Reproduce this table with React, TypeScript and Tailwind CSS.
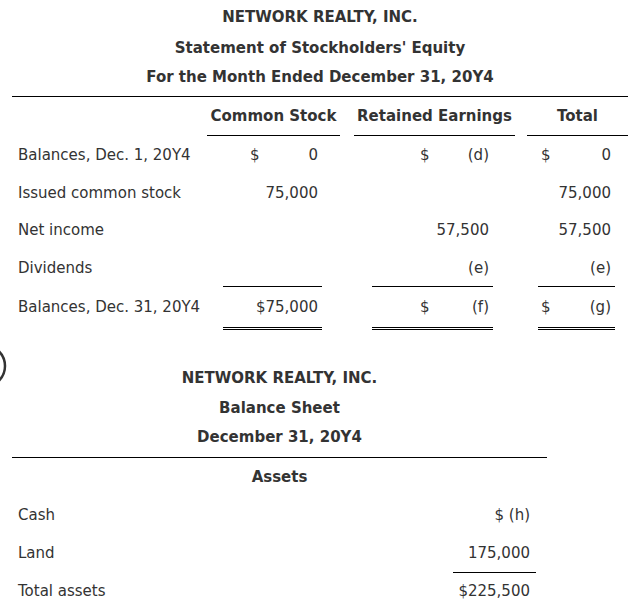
import React from "react";

const body = { fontFamily: '"DejaVu Sans", Verdana, sans-serif' };
const title = { fontFamily: '"DejaVu Sans", Tahoma, sans-serif' };

type Cell = { dollar?: boolean; value?: string };

const equityRows: { label: string; h: string; cells: Cell[] }[] = [
  {
    label: "Balances, Dec. 1, 20Y4",
    h: "h-[38px]",
    cells: [
      { dollar: true, value: "0" },
      { dollar: true, value: "(d)" },
      { dollar: true, value: "0" },
    ],
  },
  { label: "Issued common stock", h: "h-[37px]", cells: [{ value: "75,000" }, {}, { value: "75,000" }] },
  { label: "Net income", h: "h-[38px]", cells: [{}, { value: "57,500" }, { value: "57,500" }] },
  { label: "Dividends", h: "h-[37px]", cells: [{}, { value: "(e)" }, { value: "(e)" }] },
];

// column geometry
const cols = [
  { w: "w-[133px]", dollar: "left-[43px]", pr: "pr-[22px]", line: "ml-[16px] mr-[18px]" },
  { w: "w-[161px]", dollar: "left-[66px]", pr: "pr-[26px]", line: "ml-[18px] mr-[22px]" },
  { w: "w-[101px]", dollar: "left-[14px]", pr: "pr-[17px]", line: "ml-[11px] mr-[13px]" },
];
const gaps = ["", "ml-[14px]", "ml-[12px]"];

const ValueCell = ({ i, cell }: { i: number; cell: Cell }) => (
  <div className={`relative ${cols[i].w} ${gaps[i]} ${cols[i].pr} text-right`}>
    {cell.dollar && <span className={`absolute ${cols[i].dollar} top-0`}>$</span>}
    {cell.value}
  </div>
);

const Statement = () => (
  <div className="w-[616px] ml-[12px]">
    <div className="text-center font-bold text-[15px] leading-[18px] text-[#333]" style={title}>
      <div className="h-[33px] pt-[8px]">NETWORK REALTY, INC.</div>
      <div className="h-[30px] pt-[6px]">Statement of Stockholders&apos; Equity</div>
      <div className="h-[33px] pt-[5px]">For the Month Ended December 31, 20Y4</div>
    </div>
    <div className="border-t border-black" />
    <div className="flex text-[15px] leading-[18px] font-bold text-[#333] h-[39px] items-end" style={title}>
      <div className="w-[195px]" />
      {["Common Stock", "Retained Earnings", "Total"].map((h, i) => (
        <div key={h} className={`${cols[i].w} ${gaps[i]} text-center border-b border-black pb-[10px]`}>
          {h}
        </div>
      ))}
    </div>
    <div className="text-[15px] leading-[18px] text-[#333]" style={body}>
      {equityRows.map((r) => (
        <div key={r.label} className={`flex ${r.h} items-center`}>
          <div className="w-[195px] pl-[6px]">{r.label}</div>
          {r.cells.map((c, i) => (
            <ValueCell key={i} i={i} cell={c} />
          ))}
        </div>
      ))}
      <div className="flex">
        <div className="w-[195px]" />
        {cols.map((c, i) => (
          <div key={i} className={`${c.w} ${gaps[i]}`}>
            <div className={`${c.line} border-t border-black`} />
          </div>
        ))}
      </div>
      <div className="flex h-[40px] items-center">
        <div className="w-[195px] pl-[6px]">Balances, Dec. 31, 20Y4</div>
        <ValueCell i={0} cell={{ value: "$75,000" }} />
        <ValueCell i={1} cell={{ dollar: true, value: "(f)" }} />
        <ValueCell i={2} cell={{ dollar: true, value: "(g)" }} />
      </div>
      <div className="flex">
        <div className="w-[195px]" />
        {cols.map((c, i) => (
          <div key={i} className={`${c.w} ${gaps[i]}`}>
            <div className={`${c.line} border-t-[3px] border-double border-black`} />
          </div>
        ))}
      </div>
    </div>
  </div>
);

const BalanceSheet = () => (
  <div className="w-[535px] ml-[12px]">
    <div className="text-center font-bold text-[15px] leading-[18px] text-[#333]" style={title}>
      <div className="h-[30px] pt-[9px]">NETWORK REALTY, INC.</div>
      <div className="h-[30px] pt-[9px]">Balance Sheet</div>
      <div className="h-[37px] pt-[8px]">December 31, 20Y4</div>
    </div>
    <div className="border-t border-black" />
    <div className="text-center font-bold text-[15px] leading-[18px] text-[#333] h-[38px] pt-[10px]" style={title}>
      Assets
    </div>
    <div className="text-[15px] leading-[18px] text-[#333]" style={body}>
      <div className="flex h-[38px] items-center justify-between pl-[6px] pr-[17px]">
        <span>Cash</span>
        <span>$ (h)</span>
      </div>
      <div className="flex h-[38px] items-center justify-between pl-[6px] pr-[17px]">
        <span>Land</span>
        <span>175,000</span>
      </div>
      <div className="flex justify-end">
        <div className="w-[83px] mr-[11px] border-t border-black" />
      </div>
      <div className="flex h-[36px] items-center justify-between pl-[6px] pr-[17px]">
        <span>Total assets</span>
        <span>$225,500</span>
      </div>
    </div>
  </div>
);

export default function App() {
  return (
    <div className="relative w-[642px] h-[608px] bg-white overflow-hidden">
      <Statement />
      <div className="relative h-[30px]">
        <svg className="absolute left-[-40px] top-[12px]" width="48" height="48" viewBox="0 0 48 48">
          <circle cx="24" cy="24" r="21" fill="none" stroke="#333" strokeWidth="2.5" />
        </svg>
      </div>
      <BalanceSheet />
    </div>
  );
}
